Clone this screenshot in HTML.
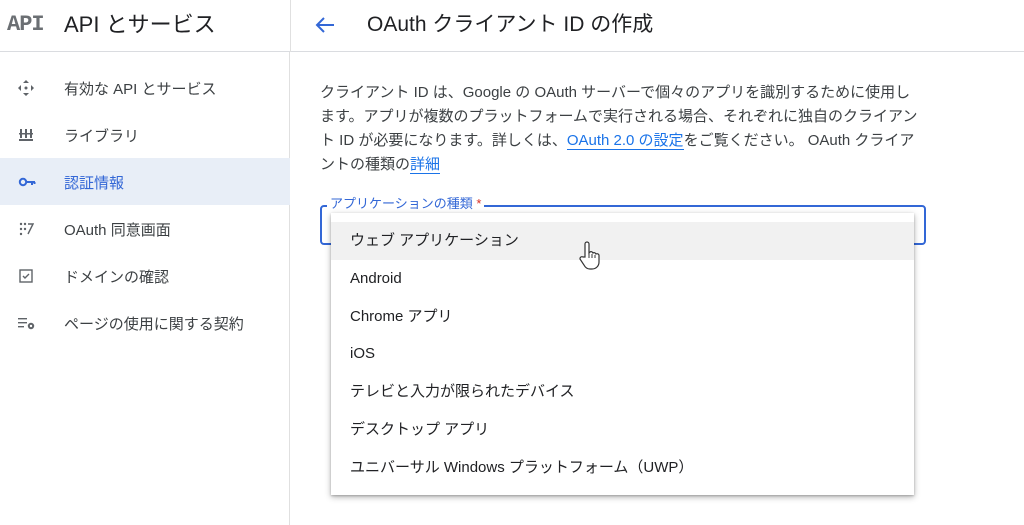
<!DOCTYPE html>
<html><head><meta charset="utf-8"><style>
*{margin:0;padding:0;box-sizing:border-box}
body{width:1024px;height:525px;overflow:hidden;background:#fff;font-family:"Liberation Sans","Noto Sans CJK JP",sans-serif;color:#202124;position:relative}
.hdr{position:absolute;left:0;top:0;width:1024px;height:52px;border-bottom:1px solid #dadce0}
.side{position:absolute;left:0;top:52px;width:290px;height:473px;border-right:1px solid #e0e0e0}
.vline{position:absolute;left:290px;top:0;width:1px;height:52px;background:#e0e0e0}
.item{position:absolute;left:0;width:290px;height:47px;font-size:15px;color:#3c4043}
.item span{position:absolute;left:64px;top:14px}
.item svg{position:absolute;left:18px;top:16px}
.sel{background:#e8eef7;color:#3367d6}
.p{position:absolute;left:320px;top:81px;width:600px;font-size:15px;line-height:24px;color:#3c4043}
.p a{color:#1a73e8;text-decoration:none;border-bottom:1px solid #1a73e8}
.field{position:absolute;left:320px;top:205px;width:606px;height:40px;border:2px solid #3367d6;border-radius:4px}
.lbl{position:absolute;left:327px;top:193px;background:#fff;padding:0 3px;font-size:13px;color:#3367d6}
.menu{position:absolute;left:331px;top:213px;width:583px;height:282px;background:#fff;box-shadow:0 2px 6px rgba(0,0,0,.3),0 1px 2px rgba(0,0,0,.2);padding-top:9px}
.mi{height:37.8px;line-height:37.8px;padding-left:19px;font-size:15px;color:#202124}
.mi.h{background:#f1f1f1}
</style></head><body>
<div class="hdr">
<div style="position:absolute;left:7px;top:13px;font-family:'Liberation Mono',monospace;font-weight:bold;font-size:22px;line-height:24px;color:#6b6f73;letter-spacing:-1px">API</div>
<div style="position:absolute;left:64px;top:11px;font-size:22px;line-height:28px;color:#202124">API とサービス</div>
<svg style="position:absolute;left:314px;top:15px" width="22" height="20" viewBox="0 0 22 20"><path d="M20 10H3M10 3L3 10l7 7" stroke="#3367d6" stroke-width="2" fill="none"/></svg>
<div style="position:absolute;left:367px;top:11px;font-size:21px;line-height:28px;color:#202124">OAuth クライアント ID の作成</div>
</div>
<div class="vline"></div>
<div class="side">
<div class="item" style="top:12px"><svg width="16" height="16" viewBox="0 0 16 16" fill="#5f6368"><path d="M8 0l3 3H5zM8 16l3-3H5zM0 8l3-3v6zM16 8l-3-3v6z"/><circle cx="8" cy="8" r="1.5"/></svg><span>有効な API とサービス</span></div>
<div class="item" style="top:59px"><svg width="16" height="16" viewBox="0 0 16 16" fill="#5f6368"><rect x="2" y="2" width="2" height="9"/><rect x="7" y="2" width="2" height="9"/><rect x="12" y="2" width="2" height="9"/><rect x="1" y="12" width="14" height="2"/><rect x="1" y="6" width="14" height="1.5"/></svg><span>ライブラリ</span></div>
<div class="item sel" style="top:106px"><svg width="18" height="16" viewBox="0 0 18 16"><circle cx="5" cy="8" r="3.2" stroke="#3367d6" stroke-width="2" fill="none"/><path d="M8 8h9M14 8v3M16.5 8v2" stroke="#3367d6" stroke-width="2"/></svg><span>認証情報</span></div>
<div class="item" style="top:153px"><svg width="16" height="16" viewBox="0 0 16 16" fill="#5f6368"><circle cx="3" cy="3" r="1.2"/><circle cx="7" cy="3" r="1.2"/><circle cx="3" cy="8" r="1.2"/><circle cx="7" cy="8" r="1.2"/><circle cx="3" cy="13" r="1.2"/><path d="M10 3h5l-5 10" stroke="#5f6368" stroke-width="1.4" fill="none"/></svg><span>OAuth 同意画面</span></div>
<div class="item" style="top:200px"><svg width="16" height="16" viewBox="0 0 16 16"><rect x="2" y="2" width="12" height="12" stroke="#5f6368" stroke-width="1.4" fill="none"/><path d="M5 8l2 2 4-4" stroke="#5f6368" stroke-width="1.4" fill="none"/></svg><span>ドメインの確認</span></div>
<div class="item" style="top:247px"><svg width="18" height="16" viewBox="0 0 18 16" fill="#5f6368"><rect x="0" y="3" width="9" height="1.4"/><rect x="0" y="7" width="9" height="1.4"/><rect x="0" y="11" width="6" height="1.4"/><circle cx="13" cy="11" r="3.2"/><circle cx="13" cy="11" r="1.2" fill="#fff"/></svg><span>ページの使用に関する契約</span></div>
</div>
<div class="p">クライアント ID は、Google の OAuth サーバーで個々のアプリを識別するために使用します。アプリが複数のプラットフォームで実行される場合、それぞれに独自のクライアント ID が必要になります。詳しくは、<a>OAuth 2.0 の設定</a>をご覧ください。 OAuth クライアントの種類の<a>詳細</a></div>
<div class="field"></div>
<div class="lbl">アプリケーションの種類 <span style="color:#d93025">*</span></div>
<div class="menu">
<div class="mi h">ウェブ アプリケーション</div>
<div class="mi">Android</div>
<div class="mi">Chrome アプリ</div>
<div class="mi">iOS</div>
<div class="mi">テレビと入力が限られたデバイス</div>
<div class="mi">デスクトップ アプリ</div>
<div class="mi">ユニバーサル Windows プラットフォーム（UWP）</div>
</div>
<svg style="position:absolute;left:578px;top:241px" width="24" height="30" viewBox="0 0 24 30"><path d="M7 16V3a2 2 0 0 1 4 0v9l1-1a2 2 0 0 1 3 1 2 2 0 0 1 3 1 2 2 0 0 1 3 2v6c0 4-3 7-7 7h-2c-3 0-5-2-6-4l-4-6a2 2 0 0 1 3-2z" fill="#fff" stroke="#333" stroke-width="1.2"/><path d="M11 12v5M14 13v4M17 14v3" stroke="#333" stroke-width="1"/></svg>
</body></html>
